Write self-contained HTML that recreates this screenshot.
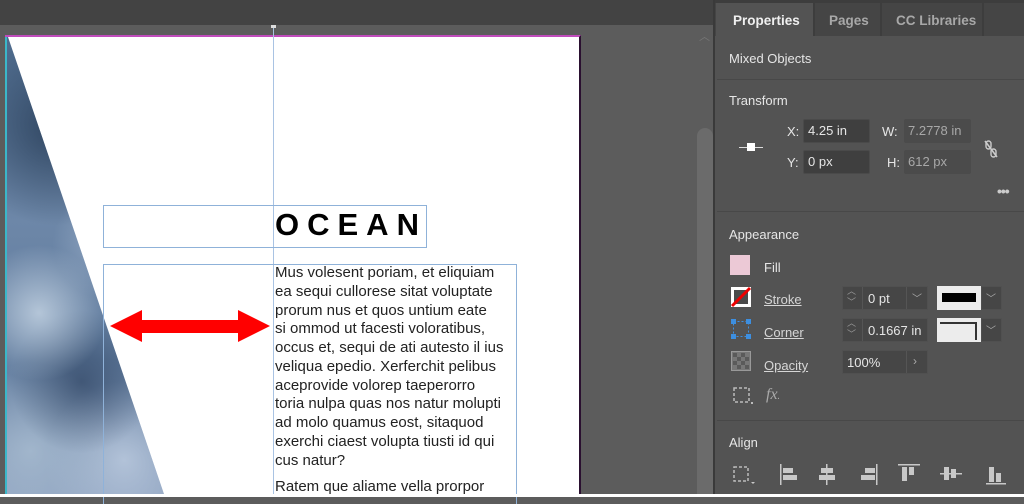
<!DOCTYPE html>
<html><head><meta charset="utf-8"><style>
*{margin:0;padding:0;box-sizing:border-box}
body{width:1024px;height:497px;overflow:hidden;background:#5c5c5c;font-family:"Liberation Sans",sans-serif;position:relative}
.abs{position:absolute}
.pt{color:#e6e6e6;font-size:13px}
.inp{position:absolute;background:#3f3f3f;border:1px solid #4a4a4a;border-radius:2px;color:#e6e6e6;font-size:13px;padding:3px 4px}
.inp2{position:absolute;background:#4b4b4b;color:#a8a8a8;font-size:13px;padding:4px 4px;border-radius:2px}
.u{position:absolute;color:#d6d6d6;font-size:13px;text-decoration:underline}
.box{position:absolute;background:#464646;border:1px solid #505050}
.tx div{white-space:nowrap}
</style></head><body>
<div class="abs" style="left:0;top:0;width:715px;height:25px;background:#434343"></div>
<div class="abs" style="left:5px;top:35px;width:576px;height:462px;background:#fff;border-top:2px solid #c04cbc;border-right:2px solid #2a1030"></div>
<div class="abs" style="left:5px;top:37px;width:170px;height:460px;clip-path:polygon(0 0,3px 0,160px 460px,0 460px);
background:
radial-gradient(circle at 30% 20%,rgba(30,50,75,.7),transparent 25%),
radial-gradient(circle at 60% 45%,rgba(160,180,205,.7),transparent 20%),
radial-gradient(circle at 20% 60%,rgba(200,215,230,.8),transparent 22%),
radial-gradient(circle at 45% 75%,rgba(40,60,90,.6),transparent 20%),
radial-gradient(circle at 15% 90%,rgba(170,190,210,.8),transparent 20%),
radial-gradient(circle at 70% 92%,rgba(190,205,225,.8),transparent 18%),
linear-gradient(180deg,#4d6a8c,#6d87a8 40%,#5f7a9c 70%,#8ea2bf)"></div>
<div class="abs" style="left:5px;top:37px;width:2px;height:460px;background:#3bb7c9"></div>
<div class="abs" style="left:273px;top:25px;width:1px;height:472px;background:#a9c3e3"></div>
<div class="abs" style="left:271px;top:25px;width:5px;height:3px;background:#ddd"></div>
<div class="abs" style="left:103px;top:205px;width:324px;height:43px;border:1px solid #8fb2d9"></div>
<div class="abs" style="left:103px;top:264px;width:414px;height:240px;border:1px solid #8fb2d9;border-bottom:none"></div>
<div class="abs" style="left:275px;top:205px;font-size:31px;font-weight:bold;letter-spacing:8px;color:#000;line-height:40px">OCEAN</div>
<div class="abs tx" style="left:275px;top:264px;font-size:15px;line-height:18.75px;color:#222">
<div>Mus volesent poriam, et eliquiam</div><div>ea sequi cullorese sitat voluptate</div><div>prorum nus et quos untium eate</div><div>si ommod ut facesti voloratibus,</div><div>occus et, sequi de ati autesto il ius</div><div>veliqua epedio. Xerferchit pelibus</div><div>aceprovide volorep taeperorro</div><div>toria nulpa quas nos natur molupti</div><div>ad molo quamus eost, sitaquod</div><div>exerchi ciaest volupta tiusti id qui</div><div>cus natur?</div><div style="margin-top:8px">Ratem que aliame vella prorpor</div></div>
<svg class="abs" style="left:108px;top:306px" width="164" height="40"><polygon points="2,20 34,4 34,14 130,14 130,4 162,20 130,36 130,27 34,27 34,36" fill="#f00"/></svg>
<div class="abs" style="left:697px;top:128px;width:16px;height:369px;background:#6b6b6b;border-radius:8px 8px 0 0"></div>
<div class="abs" style="left:699px;top:28px;color:#777;font-size:11px">︿</div>
<div class="abs" style="left:713px;top:0;width:2px;height:497px;background:#3a3a3a"></div>
<div class="abs" style="left:715px;top:0;width:309px;height:497px;background:#535353"></div>
<div class="abs" style="left:715px;top:0;width:309px;height:36px;background:#454545;border-top:3px solid #3d3d3d"></div>
<div class="abs" style="left:716px;top:3px;width:97px;height:33px;background:#535353"></div>
<div class="abs" style="left:813px;top:3px;width:2px;height:33px;background:#3d3d3d"></div>
<div class="abs" style="left:880px;top:3px;width:2px;height:33px;background:#3d3d3d"></div>
<div class="abs" style="left:982px;top:3px;width:2px;height:33px;background:#3d3d3d"></div>
<div class="abs" style="left:733px;top:13px;font-size:13.5px;font-weight:bold;color:#f0f0f0">Properties</div>
<div class="abs" style="left:829px;top:13px;font-size:13.5px;font-weight:bold;color:#a8a8a8">Pages</div>
<div class="abs" style="left:896px;top:13px;font-size:13.5px;font-weight:bold;color:#a8a8a8">CC Libraries</div>
<div class="abs pt" style="left:729px;top:51px">Mixed Objects</div>
<div class="abs" style="left:717px;top:79px;width:307px;height:1px;background:#484848"></div>
<div class="abs pt" style="left:729px;top:93px">Transform</div>
<div class="abs" style="left:739px;top:147px;width:24px;height:1px;background:#ddd"></div>
<div class="abs" style="left:747px;top:143px;width:8px;height:8px;background:#fff"></div>
<div class="abs pt" style="left:787px;top:124px">X:</div>
<div class="abs pt" style="left:787px;top:155px">Y:</div>
<div class="inp" style="left:803px;top:119px;width:67px;height:24px">4.25 in</div>
<div class="inp" style="left:803px;top:150px;width:67px;height:24px">0 px</div>
<div class="abs pt" style="left:882px;top:124px">W:</div>
<div class="abs pt" style="left:887px;top:155px">H:</div>
<div class="inp2" style="left:904px;top:119px;width:67px;height:24px">7.2778 in</div>
<div class="inp2" style="left:904px;top:150px;width:67px;height:24px">612 px</div>
<svg class="abs" style="left:982px;top:138px" width="18" height="22"><path d="M3 3 L15 19" stroke="#ccc" stroke-width="1.6" fill="none"/><rect x="4" y="3" width="5" height="8" rx="2.5" stroke="#ccc" fill="none" stroke-width="1.4"/><rect x="9" y="11" width="5" height="8" rx="2.5" stroke="#ccc" fill="none" stroke-width="1.4"/></svg>
<div class="abs" style="left:997px;top:183px;color:#ccc;font-size:14px;letter-spacing:-1px;font-weight:bold">•••</div>
<div class="abs" style="left:717px;top:211px;width:307px;height:1px;background:#484848"></div>
<div class="abs pt" style="left:729px;top:227px">Appearance</div>
<div class="abs" style="left:730px;top:255px;width:20px;height:20px;background:#ecc9d6"></div>
<div class="abs pt" style="left:764px;top:260px">Fill</div>
<svg class="abs" style="left:730px;top:286px" width="22" height="22"><rect x="1" y="1" width="20" height="20" fill="#fff"/><rect x="4" y="4" width="14" height="14" fill="#4a4a4a"/><line x1="2" y1="20" x2="20" y2="2" stroke="#e00" stroke-width="3"/></svg>
<div class="u" style="left:764px;top:292px">Stroke </div>
<svg class="abs" style="left:731px;top:319px" width="20" height="20"><g fill="#3d8fe0"><rect x="0" y="0" width="5" height="5"/><rect x="15" y="0" width="5" height="5"/><rect x="0" y="15" width="5" height="5"/><rect x="15" y="15" width="5" height="5"/></g><rect x="2.5" y="2.5" width="15" height="15" fill="none" stroke="#3d8fe0" stroke-dasharray="2 2"/></svg>
<div class="u" style="left:764px;top:325px">Corner </div>
<svg class="abs" style="left:731px;top:351px" width="20" height="20"><rect x="0.5" y="0.5" width="19" height="19" fill="#777" stroke="#999"/><g fill="#5a5a5a"><rect x="2" y="2" width="4" height="4"/><rect x="10" y="2" width="4" height="4"/><rect x="6" y="6" width="4" height="4"/><rect x="14" y="6" width="4" height="4"/><rect x="2" y="10" width="4" height="4"/><rect x="10" y="10" width="4" height="4"/><rect x="6" y="14" width="4" height="4"/><rect x="14" y="14" width="4" height="4"/></g></svg>
<div class="u" style="left:764px;top:358px">Opacity </div>
<svg class="abs" style="left:732px;top:386px" width="22" height="20"><rect x="2" y="2" width="15" height="14" fill="none" stroke="#bbb" stroke-width="1.5" stroke-dasharray="3 2"/><rect x="19" y="16" width="2" height="2" fill="#bbb"/></svg>
<div class="abs" style="left:766px;top:386px;color:#aaa;font-style:italic;font-size:16px;font-family:'Liberation Serif',serif">fx<span style="font-size:10px">.</span></div>
<div class="box" style="left:842px;top:286px;width:86px;height:24px"></div>
<div class="abs" style="left:862px;top:287px;width:1px;height:22px;background:#555"></div>
<div class="abs" style="left:906px;top:287px;width:1px;height:22px;background:#555"></div>
<div class="abs" style="left:847px;top:286px;color:#999;font-size:9px;line-height:11px">︿<br>﹀</div>
<div class="abs pt" style="left:868px;top:291px">0 pt</div>
<div class="abs" style="left:912px;top:290px;color:#aaa;font-size:10px">﹀</div>
<div class="abs" style="left:937px;top:286px;width:44px;height:24px;background:#ececec"></div>
<div class="abs" style="left:942px;top:293px;width:34px;height:9px;background:#000"></div>
<div class="box" style="left:981px;top:286px;width:21px;height:24px"></div>
<div class="abs" style="left:986px;top:290px;color:#aaa;font-size:10px">﹀</div>
<div class="box" style="left:842px;top:318px;width:86px;height:24px"></div>
<div class="abs" style="left:862px;top:319px;width:1px;height:22px;background:#555"></div>
<div class="abs" style="left:847px;top:318px;color:#999;font-size:9px;line-height:11px">︿<br>﹀</div>
<div class="abs pt" style="left:868px;top:323px">0.1667 in</div>
<div class="abs" style="left:937px;top:318px;width:44px;height:24px;background:#ececec"></div>
<svg class="abs" style="left:937px;top:318px" width="44" height="24"><path d="M3 5 H39 V22" stroke="#333" stroke-width="2" fill="none"/></svg>
<div class="box" style="left:981px;top:318px;width:21px;height:24px"></div>
<div class="abs" style="left:986px;top:322px;color:#aaa;font-size:10px">﹀</div>
<div class="box" style="left:842px;top:350px;width:86px;height:24px"></div>
<div class="abs" style="left:906px;top:351px;width:1px;height:22px;background:#555"></div>
<div class="abs pt" style="left:847px;top:355px">100%</div>
<div class="abs" style="left:913px;top:354px;color:#aaa;font-size:12px">›</div>
<div class="abs" style="left:717px;top:420px;width:307px;height:1px;background:#484848"></div>
<div class="abs pt" style="left:729px;top:435px">Align</div>
<svg class="abs" style="left:730px;top:462px" width="290" height="26" fill="#c8c8c8">
<rect x="4" y="5" width="14" height="14" fill="none" stroke="#bbb" stroke-width="1.5" stroke-dasharray="3 2"/><path d="M21 20 l4 0 l-2 2z"/>
<rect x="50" y="2" width="1.5" height="21"/><rect x="53" y="6" width="10" height="5"/><rect x="53" y="13" width="14" height="5"/>
<rect x="96" y="2" width="1.5" height="21"/><rect x="91" y="6" width="12" height="5"/><rect x="89" y="13" width="16" height="5"/>
<rect x="146" y="2" width="1.5" height="21"/><rect x="135" y="6" width="10" height="5"/><rect x="131" y="13" width="14" height="5"/>
<rect x="168" y="2" width="22" height="1.5"/><rect x="172" y="5" width="5" height="14"/><rect x="179" y="5" width="5" height="8"/>
<rect x="210" y="11" width="22" height="1.5"/><rect x="214" y="5" width="5" height="13"/><rect x="221" y="7" width="5" height="9"/>
<rect x="256" y="21" width="20" height="1.5"/><rect x="259" y="5" width="5" height="15"/><rect x="266" y="11" width="5" height="9"/>
</svg>
<div class="abs" style="left:0;top:494px;width:1024px;height:3px;background:#fff"></div>
</body></html>
